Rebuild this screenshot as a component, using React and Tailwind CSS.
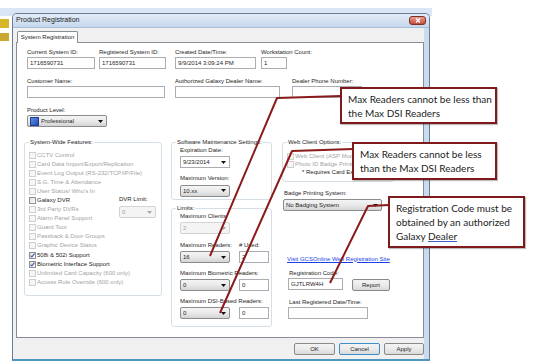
import React from "react";

const Arrow = ({ muted }) => (
  <svg width="5" height="3" viewBox="0 0 5 3" className="shrink-0">
    <path d="M0 0h5L2.5 3z" fill={muted ? "#a8a8a8" : "#111"} />
  </svg>
);

const Label = ({ children, className = "" }) => (
  <div className={`h-[7px] leading-[7px] text-[6px] whitespace-nowrap text-[#1e1e1e] ${className}`}>{children}</div>
);

const Field = ({ value, className = "" }) => (
  <div className={`h-[12px] bg-white border border-[#abadb3] pl-[2px] text-[6px] leading-[10px] text-[#1e1e1e] whitespace-nowrap overflow-hidden ${className}`}>
    {value}
  </div>
);

const Combo = ({ value, className = "", kind = "list", icon }) => {
  const skin = {
    list: "bg-gradient-to-b from-[#f4f4f4] via-[#eaeaea] to-[#d4d4d4] border-[#8d8d8d] rounded-[2px] text-[#1e1e1e]",
    date: "bg-white border-[#abadb3] text-[#1e1e1e]",
    off: "bg-[#f4f4f4] border-[#d3d3d3] rounded-[2px] text-[#a0a0a0]",
  }[kind];
  return (
    <div className={`h-[12px] border flex items-center pl-[2px] pr-[3px] gap-[2px] text-[6px] ${skin} ${className}`}>
      {icon}
      <span className="flex-1 whitespace-nowrap overflow-hidden leading-[10px]">{value}</span>
      <Arrow muted={kind === "off"} />
    </div>
  );
};

const Check = ({ checked, off }) => (
  <span
    className={`w-[7px] h-[7px] shrink-0 border flex items-center justify-center ${
      off ? "border-[#cfcfcf] bg-[#f6f6f6]" : "border-[#8e8f8f] bg-gradient-to-br from-[#dedede] to-white"
    }`}
  >
    {checked && (
      <svg width="5" height="5" viewBox="0 0 5 5">
        <path d="M0.6 2.6L1.9 4L4.4 0.7" stroke="#2b57a6" strokeWidth="1.1" fill="none" />
      </svg>
    )}
  </span>
);

const Item = ({ text, checked, on }) => (
  <div className="h-[9.1px] flex items-center gap-[1px]">
    <Check checked={checked} off={!on} />
    <span className={`text-[6px] whitespace-nowrap ${on ? "text-[#1e1e1e]" : "text-[#a3a3a3]"}`}>{text}</span>
  </div>
);

const Group = ({ title, className = "", children }) => (
  <div className={`relative border border-[#d5dfe5] rounded-[3px] ${className}`}>
    <span className="absolute -top-[4px] left-[4px] bg-white px-[1px] text-[6px] leading-[7px] text-[#1e1e1e] whitespace-nowrap">
      {title}
    </span>
    {children}
  </div>
);

const Btn = ({ children, className = "" }) => (
  <div
    className={`h-[12px] flex items-center justify-center border rounded-[2px] bg-gradient-to-b from-[#f3f3f3] via-[#ebebeb] to-[#d9d9d9] text-[6px] text-[#1e1e1e] ${className}`}
  >
    {children}
  </div>
);

const Callout = ({ className, children }) => (
  <div
    className={`absolute bg-white border-2 border-[#7e1a1c] font-['Lato',sans-serif] text-[10px] leading-[14px] whitespace-nowrap text-[#222] shadow-[1px_1px_1px_rgba(0,0,0,0.25)] ${className}`}
  >
    {children}
  </div>
);

const features = [
  ["CCTV Control"],
  ["Card Data Import/Export/Replication"],
  ["Event Log Output (RS-232/TCP/IP/File)"],
  ["S.G. Time & Attendance"],
  ["User Status/ Who's In"],
];

const features2 = [
  ["Guard Tour"],
  ["Passback & Door Groups"],
  ["Graphic Device Status"],
  ["508i & 502i Support", true, true],
  ["Biometric Interface Support", true, true],
  ["Unlimited Card Capacity (600 only)"],
  ["Access Rule Override (600 only)"],
];

export default function App() {
  return (
    <div className="relative w-[550px] h-[364px] overflow-hidden bg-white font-['Liberation_Sans',Arial,sans-serif]">
      {/* window behind the dialog */}
      <div className="absolute top-[8px] left-0 w-[432px] h-[8px] bg-[#d9e6f5]" />
      <div className="absolute top-[19px] left-0 w-[9px] h-[9px] bg-[#d8b62a]" />
      <div className="absolute top-[33px] left-0 w-[9px] h-[8px] bg-[#c9a830]" />

      <div className="relative ml-[12px] mt-[13px] w-[418px] h-[348px] flex flex-col border border-[#6b7c92] border-b-2 border-b-[#4f96c2] rounded-t-[5px] bg-[#f0f0f0] overflow-hidden">
        {/* title bar */}
        <div className="h-[14px] shrink-0 flex items-center pl-[3px] bg-gradient-to-b from-[#e3ecf7] to-[#c6d8ee] border-b border-[#a8bdd6]">
          <span className="text-[7px] text-[#1b1b1b]">Product Registration</span>
          <div className="ml-auto mr-[3px] w-[17px] h-[9px] rounded-[3px] border border-[#7d3125] bg-gradient-to-b from-[#e8a092] to-[#c3493a] flex items-center justify-center">
            <svg width="6" height="5" viewBox="0 0 6 5">
              <path d="M1 0.5L5 4.5M5 0.5L1 4.5" stroke="#fff" strokeWidth="1.3" />
            </svg>
          </div>
        </div>

        <div className="flex-1 flex border-r-[5px] border-[#c9dbef]">
          <div className="flex-1 flex flex-col pl-[3px] pt-[3px]">
            {/* tab */}
            <div className="relative z-10 -mb-[1px] ml-[1px] w-[61px] h-[12px] bg-white border border-b-0 border-[#898c95] rounded-t-[2px] flex items-center justify-center text-[6px] text-[#1e1e1e]">
              System Registration
            </div>

            {/* tab panel */}
            <div className="h-[296px] bg-white border border-[#898c95] px-[7px] pt-[6px] flex flex-col">
              <div className="flex pl-[3px]">
                <div className="flex flex-col gap-[1px] w-[68px]">
                  <Label>Current System ID:</Label>
                  <Field value="1716590731" />
                </div>
                <div className="flex flex-col gap-[1px] w-[67px] ml-[4px]">
                  <Label>Registered System ID:</Label>
                  <Field value="1716590731" />
                </div>
                <div className="flex flex-col gap-[1px] w-[81px] ml-[9px]">
                  <Label>Created Date/Time:</Label>
                  <Field value="9/9/2014 3:09:24 PM" />
                </div>
                <div className="flex flex-col gap-[1px] w-[26px] ml-[5px]">
                  <Label>Workstation Count:</Label>
                  <Field value="1" />
                </div>
              </div>

              <div className="flex pl-[3px] mt-[9px]">
                <div className="flex flex-col gap-[1px] w-[138px]">
                  <Label>Customer Name:</Label>
                  <Field value="" />
                </div>
                <div className="flex flex-col gap-[1px] w-[105px] ml-[10px]">
                  <Label>Authorized Galaxy Dealer Name:</Label>
                  <Field value="" />
                </div>
                <div className="flex flex-col gap-[1px] w-[70px] ml-[12px]">
                  <Label>Dealer Phone Number:</Label>
                  <Field value="" />
                </div>
              </div>

              <div className="flex flex-col gap-[1px] pl-[3px] mt-[9px]">
                <Label>Product Level:</Label>
                <Combo
                  className="w-[80px] pl-[1px]"
                  value="Professional"
                  icon={<span className="w-[9px] h-[9px] shrink-0 bg-gradient-to-br from-[#5d8fe6] to-[#1f4fb5] border border-[#1b3f8a]" />}
                />
              </div>

              <div className="flex items-start mt-[15px]">
                {/* system-wide features */}
                <Group title="System-Wide Features:" className="w-[138px] h-[154px] pl-[4px] pt-[7.5px]">
                  {features.map(([t]) => (
                    <Item key={t} text={t} />
                  ))}
                  <div className="flex">
                    <div className="w-[90px]">
                      <Item text="Galaxy DVR" on />
                      <Item text="3rd Party DVRs" />
                      <Item text="Alarm Panel Support" />
                    </div>
                    <div className="flex flex-col">
                      <Label>DVR Limit:</Label>
                      <Combo kind="off" value="0" className="w-[37px] mt-[3.5px]" />
                    </div>
                  </div>
                  {features2.map(([t, c, on]) => (
                    <Item key={t} text={t} checked={c} on={on} />
                  ))}
                </Group>

                {/* middle column */}
                <div className="flex flex-col w-[101px] ml-[9px]">
                  <Group title="Software Maintenance Settings:" className="h-[58px] pl-[8px] pt-[3.5px]">
                    <Label>Expiration Date:</Label>
                    <Combo kind="date" value="9/23/2014" className="w-[50px] mt-[2.5px]" />
                    <Label className="mt-[6.5px]">Maximum Version:</Label>
                    <Combo value="10.xx" className="w-[50px] mt-[3px]" />
                  </Group>

                  <Group title="Limits:" className="h-[119px] mt-[8px] pl-[8px] pt-[3.5px]">
                    <Label>Maximum Clients:</Label>
                    <Combo kind="off" value="2" className="w-[50px] mt-[2.5px]" />

                    <div className="flex mt-[7.5px]">
                      <Label className="w-[59px]">Maximum Readers:</Label>
                      <Label># Used:</Label>
                    </div>
                    <div className="flex mt-[2.5px]">
                      <Combo value="16" className="w-[50px]" />
                      <Field value="2" className="w-[30px] ml-[9px]" />
                    </div>

                    <Label className="mt-[6.5px]">Maximum Biometric Readers:</Label>
                    <div className="flex mt-[2.5px]">
                      <Combo value="0" className="w-[50px]" />
                      <Field value="0" className="w-[30px] ml-[9px]" />
                    </div>

                    <Label className="mt-[6.5px]">Maximum DSI-Based Readers:</Label>
                    <div className="flex mt-[2.5px]">
                      <Combo value="0" className="w-[50px]" />
                      <Field value="0" className="w-[30px] ml-[9px]" />
                    </div>
                  </Group>
                </div>

                {/* right column */}
                <div className="flex flex-col w-[112px] ml-[10px]">
                  <Group title="Web Client Options:" className="h-[40px] pl-[4px] pt-[9px]">
                    <div className="h-[8px] flex items-center gap-[1px]">
                      <Check off />
                      <span className="text-[6px] text-[#a3a3a3] whitespace-nowrap">Web Client (ASP Mode)</span>
                    </div>
                    <div className="h-[8px] flex items-center gap-[1px]">
                      <Check off />
                      <span className="text-[6px] text-[#a3a3a3] whitespace-nowrap">Photo ID Badge Printing</span>
                    </div>
                    <Label className="ml-[15px] mt-[1px]">* Requires Card Exchange</Label>
                  </Group>

                  <Label className="ml-[2px] mt-[7.5px]">Badge Printing System:</Label>
                  <Combo value="No Badging System" className="w-[99px] ml-[1px] mt-[2.5px]" />

                  <div className="ml-[5px] mt-[44.5px] h-[7px] leading-[7px] text-[6px] text-[#1a3fe6] underline whitespace-nowrap">
                    Visit GCSOnline Web Registration Site
                  </div>

                  <Label className="ml-[7px] mt-[7px]">Registration Code:</Label>
                  <div className="flex items-start ml-[6px] mt-[1.5px]">
                    <Field value="GJTLRW4H" className="w-[55px]" />
                    <Btn className="w-[38px] h-[11px] ml-[9px] mt-[1px] border-[#8a8a8a]">Report</Btn>
                  </div>

                  <Label className="ml-[7px] mt-[7.5px]">Last Registered Date/Time:</Label>
                  <Field value="" className="w-[80px] ml-[6px] mt-[1.5px]" />
                </div>
              </div>
            </div>

            {/* dialog buttons */}
            <div className="flex justify-end gap-[4px] mt-[5px]">
              <Btn className="w-[41px] border-[#8a8a8a]">OK</Btn>
              <Btn className="w-[41px] border-[#3c8ec9]">Cancel</Btn>
              <Btn className="w-[40px] border-[#8a8a8a]">Apply</Btn>
            </div>
          </div>
        </div>
      </div>

      {/* annotation lines */}
      <svg className="absolute inset-0 pointer-events-none" width="550" height="364">
        <g stroke="#8b1a1a" strokeWidth="2" fill="none" strokeLinejoin="round">
          <polyline points="341,96 277,98 210,256" />
          <polyline points="353,149 292,151 220,313" />
          <polyline points="389,205 368,206 330,283" />
        </g>
      </svg>

      <Callout className="left-[340px] top-[87px] w-[157px] h-[37px] pl-[6px] pt-[3px]">
        <div>Max Readers cannot be less than</div>
        <div>the Max DSI Readers</div>
      </Callout>
      <Callout className="left-[352px] top-[142px] w-[145px] h-[38px] pl-[6px] pt-[3px]">
        <div>Max Readers cannot be less</div>
        <div>than the Max DSI Readers</div>
      </Callout>
      <Callout className="left-[388px] top-[196px] w-[137px] h-[52px] pl-[6px] pt-[3px]">
        <div>Registration Code must be</div>
        <div>obtained by an authorized</div>
        <div>
          Galaxy <span className="underline decoration-[#3b5fc4]">Dealer</span>
        </div>
      </Callout>
    </div>
  );
}
